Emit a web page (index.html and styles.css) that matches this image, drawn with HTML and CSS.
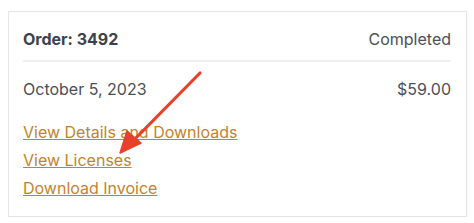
FILE: index.html
```html
<!DOCTYPE html>
<html>
  <head>
    <title>Order 3492</title>
    <meta charset="UTF-8" />
    <link rel="stylesheet" href="styles.css">
  </head>
  <body>
    <div class="order-card">
      <div class="order-row order-head">
        <span class="order-number">Order: 3492</span>
        <span class="order-status">Completed</span>
      </div>

      <div class="order-row order-meta">
        <span>October 5, 2023</span>
        <span>$59.00</span>
      </div>

      <div class="order-links">
        <a href="#">View Details and Downloads</a>
        <a href="#">View Licenses</a>
        <a href="#">Download Invoice</a>
      </div>

      <!-- annotation arrow -->
      <svg class="callout" width="474" height="223" viewBox="0 0 474 223">
        <line x1="200" y1="73" x2="128" y2="146" stroke="#e8402a" stroke-width="3.2" stroke-linecap="round" />
        <polygon points="120,153 127,131 141,143" fill="#e8402a" stroke="#e8402a" stroke-width="1.5" stroke-linejoin="round" />
      </svg>
    </div>
  </body>
</html>
```

FILE: styles.css
```css
body {
  margin: 0;
  background: #fff;
  font-family: Inter, "Open Sans", sans-serif;
}

.order-card {
  margin: 11px 0 0 8px;
  width: 459px;
  height: 206px;
  border: 1px solid #e6e6e6;
  box-shadow: 1px 1px 2px rgba(0, 0, 0, 0.04);
  padding: 0 15px 0 14px;
  box-sizing: border-box;
}

.order-row {
  display: flex;
  justify-content: space-between;
  align-items: baseline;
  font-size: 16px;
  color: #4b4f56;
}

.order-head {
  padding-top: 17px;
  padding-bottom: 11px;
  border-bottom: 2px solid #f0f0f0;
}

.order-number {
  font-weight: 700;
  color: #3c424d;
}

.order-meta {
  padding-top: 17px;
}

.order-links {
  display: flex;
  flex-direction: column;
  align-items: flex-start;
  gap: 8px;
  margin-top: 23px;
}

.order-links a {
  font-size: 16px;
  color: #c4822c;
  text-decoration: underline;
}

.callout {
  position: absolute;
  left: 0;
  top: 0;
  pointer-events: none;
}
```
